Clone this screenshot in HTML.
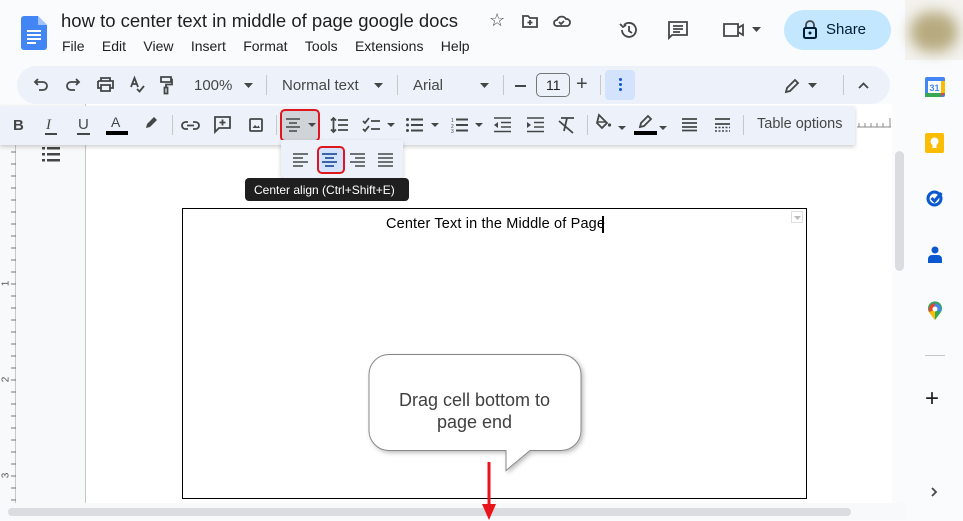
<!DOCTYPE html>
<html><head><style>
*{margin:0;padding:0;box-sizing:border-box}
body{width:963px;height:520px;overflow:hidden;background:#f9fbfd;font-family:"Liberation Sans",sans-serif;position:relative;color:#444746}
.a{position:absolute}
.t{position:absolute;white-space:nowrap}
svg{position:absolute;overflow:visible}
.ic{fill:none;stroke:#444746;stroke-width:1.8}
.sep{position:absolute;width:1px;background:#c7c7c7}
</style></head><body>
<!-- top header -->
<svg style="left:21px;top:16px" width="26" height="34" viewBox="0 0 26 34"><path d="M3 0h14l9 9v22a3 3 0 0 1-3 3H3a3 3 0 0 1-3-3V3a3 3 0 0 1 3-3z" fill="#4285f4"/><path d="M17 0v9h9z" fill="#a1c2fa"/><path d="M6 15h14M6 19h14M6 23h14M6 27h9" stroke="#fff" stroke-width="2"/></svg>
<div class="t" style="left:61px;top:10px;font-size:18.5px;color:#1f1f1f">how to center text in middle of page google docs</div>
<div class="t" style="left:62px;top:38px;font-size:14px;color:#1f1f1f;word-spacing:0.45px">File&nbsp;&nbsp;&nbsp;&nbsp;Edit&nbsp;&nbsp;&nbsp;&nbsp;View&nbsp;&nbsp;&nbsp;&nbsp;Insert&nbsp;&nbsp;&nbsp;&nbsp;Format&nbsp;&nbsp;&nbsp;&nbsp;Tools&nbsp;&nbsp;&nbsp;&nbsp;Extensions&nbsp;&nbsp;&nbsp;&nbsp;Help</div>
<div class="t" style="left:489px;top:10px;font-size:18px;color:#444746">☆</div>
<svg style="left:522px;top:15px" width="16" height="13"><path class="ic" d="M1 1h5l2 2h7v9H1z M8 5v5M5.5 7.5h5" stroke-width="1.5"/></svg>
<svg style="left:553px;top:15px" width="18" height="12"><path class="ic" d="M4 11a3 3 0 0 1 0-6 5 5 0 0 1 9-1 3.5 3.5 0 0 1 1 7z M6 7l2 2 3-3" stroke-width="1.5"/></svg>
<svg style="left:619px;top:20px" width="20" height="20"><path class="ic" d="M3 10a7 7 0 1 0 2-5M1 4l3 3 3-2M10 6v5l3 2" stroke-width="2"/></svg>
<svg style="left:668px;top:21px" width="20" height="20"><path class="ic" d="M1 1h18v13H4l-3 3z M5 5h10M5 8h10M5 11h7" stroke-width="1.8"/></svg>
<svg style="left:723px;top:22px" width="22" height="16"><path class="ic" d="M1 2h14v12H1z M15 6l5-3v10l-5-3" stroke-width="2"/></svg>
<svg style="left:752px;top:27px" width="10" height="5"><path d="M0 0h9l-4.5 5z" fill="#444746"/></svg>
<div class="a" style="left:784px;top:10px;width:107px;height:40px;border-radius:20px;background:#c2e7ff"></div>
<svg style="left:803px;top:20px" width="14" height="18"><path class="ic" d="M3 8V5a4 4 0 0 1 8 0v3" stroke-width="2"/><rect x="1" y="8" width="12" height="10" rx="1.5" fill="none" stroke="#001d35" stroke-width="2"/><circle cx="7" cy="13" r="1.5" fill="#001d35"/></svg>
<div class="t" style="left:826px;top:21px;font-size:15px;color:#001d35">Share</div>
<div class="a" style="left:905px;top:0;width:58px;height:60px;background:#f4f3ef"></div>
<div class="a" style="left:910px;top:12px;width:48px;height:40px;border-radius:20px;background:#b7aa7f;filter:blur(7px)"></div>

<!-- toolbar 1 -->
<div class="a" style="left:17px;top:66px;width:873px;height:38px;border-radius:19px;background:#edf2fa"></div>
<svg style="left:34px;top:78px" width="14" height="12"><path class="ic" d="M4 1L1 4l3 3M1 4h8a4 4 0 0 1 0 8H5" stroke-width="1.6"/></svg>
<svg style="left:66px;top:78px" width="14" height="12"><path class="ic" d="M10 1l3 3-3 3M13 4H5a4 4 0 0 0 0 8h4" stroke-width="1.6"/></svg>
<svg style="left:97px;top:77px" width="17" height="15"><path class="ic" d="M4 4V1h9v3M1 4h15v7h-3M4 11H1V4M4 8h9v6H4z" stroke-width="1.6"/></svg>
<svg style="left:130px;top:77px" width="15" height="15"><path class="ic" d="M1 10L4.5 1 8 10M2.5 7h4M7 12l2.5 2.5L14 9" stroke-width="1.5"/></svg>
<svg style="left:160px;top:76px" width="13" height="18"><path class="ic" d="M1 1h10v5H1zM11 3.5h1v5H6v3M4.5 11.5h3v6h-3z" stroke-width="1.5"/></svg>
<div class="t" style="left:194px;top:77px;font-size:15px;color:#444746">100%</div>
<svg style="left:244px;top:83px" width="9" height="5"><path d="M0 0h9l-4.5 5z" fill="#444746"/></svg>
<div class="sep" style="left:266px;top:75px;height:20px"></div>
<div class="t" style="left:282px;top:77px;font-size:15px;color:#444746">Normal text</div>
<svg style="left:374px;top:83px" width="9" height="5"><path d="M0 0h9l-4.5 5z" fill="#444746"/></svg>
<div class="sep" style="left:397px;top:75px;height:20px"></div>
<div class="t" style="left:413px;top:77px;font-size:15px;color:#444746">Arial</div>
<svg style="left:480px;top:83px" width="9" height="5"><path d="M0 0h9l-4.5 5z" fill="#444746"/></svg>
<div class="sep" style="left:503px;top:75px;height:20px"></div>
<div class="a" style="left:515px;top:85px;width:11px;height:2px;background:#444746"></div>
<div class="a" style="left:536px;top:73px;width:34px;height:24px;border:1px solid #747775;border-radius:5px"></div>
<div class="t" style="left:546px;top:77px;font-size:14px;color:#1f1f1f">11</div>
<div class="t" style="left:576px;top:73px;font-size:20px;color:#444746">+</div>
<div class="sep" style="left:600px;top:75px;height:20px"></div>
<div class="a" style="left:605px;top:70px;width:30px;height:30px;border-radius:4px;background:#d3e3fd"></div>
<div class="a" style="left:619px;top:78px;width:3px;height:3px;border-radius:2px;background:#0b57d0;box-shadow:0 5px 0 #0b57d0,0 10px 0 #0b57d0"></div>
<svg style="left:784px;top:78px" width="16" height="16"><path class="ic" d="M2 14l1-4 8-8 3 3-8 8z" stroke-width="1.6"/></svg>
<svg style="left:808px;top:83px" width="9" height="5"><path d="M0 0h9l-4.5 5z" fill="#444746"/></svg>
<div class="sep" style="left:843px;top:75px;height:20px"></div>
<svg style="left:858px;top:82px" width="11" height="7"><path class="ic" d="M1 6l4.5-4.5L10 6" stroke-width="1.8"/></svg>

<!-- page area -->
<div class="a" style="left:0;top:104px;width:86px;height:416px;background:#f8f9fa;border-right:1px solid #c7c7c7"></div>
<div class="a" style="left:86px;top:104px;width:806px;height:404px;background:#fff"></div>
<div class="a" style="left:15px;top:140px;width:1px;height:370px;background:#c7c7c7"></div>
<svg style="left:0;top:140px" width="20" height="370"><g stroke="#777" stroke-width="1">
<path d="M11 12h5M11 24h5M11 36h5M11 48h5M11 60h5M11 72h5M11 84h5M11 96h5M11 108h5M11 120h5M11 132h5M11 144h5M11 156h5M11 168h5M11 180h5M11 192h5M11 204h5M11 216h5M11 228h5M11 240h5M11 252h5M11 264h5M11 276h5M11 288h5M11 300h5M11 312h5M11 324h5M11 336h5M11 348h5M11 360h5"/></g></svg>
<div class="t" style="left:3px;top:278px;font-size:10px;color:#555;transform:rotate(-90deg)">1</div>
<div class="t" style="left:3px;top:374px;font-size:10px;color:#555;transform:rotate(-90deg)">2</div>
<div class="t" style="left:3px;top:470px;font-size:10px;color:#555;transform:rotate(-90deg)">3</div>
<svg style="left:42px;top:147px" width="20" height="16"><g fill="#444746"><rect x="0" y="0" width="3" height="2.5"/><rect x="0" y="6" width="3" height="2.5"/><rect x="0" y="12" width="3" height="2.5"/><rect x="5" y="0" width="13" height="2.5"/><rect x="5" y="6" width="13" height="2.5"/><rect x="5" y="12" width="13" height="2.5"/></g></svg>
<svg style="left:855px;top:114px" width="38" height="14"><path d="M2 13h34M4 9v4M10 9v4M16 9v4M22 9v4M28 9v4M35 4v9" stroke="#888" stroke-width="1"/></svg>
<!-- scrollbars -->
<div class="a" style="left:895px;top:151px;width:9px;height:120px;border-radius:5px;background:#dadce0"></div>
<div class="a" style="left:0;top:503px;width:905px;height:17px;background:#f8f9fa"></div>
<div class="a" style="left:8px;top:508px;width:843px;height:8px;border-radius:4px;background:#dadce0"></div>

<!-- table -->
<div class="a" style="left:182px;top:208px;width:625px;height:291px;border:1px solid #000;background:#fff"></div>
<div class="a" style="left:791px;top:211px;width:12px;height:12px;border:1px solid #ddd"></div>
<svg style="left:794px;top:216px" width="7" height="4"><path d="M0 0h7l-3.5 4z" fill="#bbb"/></svg>
<div class="t" style="left:386px;top:216px;font-size:14.5px;letter-spacing:0.15px;color:#000">Center Text in the Middle of Page</div>
<div class="a" style="left:602px;top:216px;width:2px;height:17px;background:#000"></div>

<!-- callout -->
<svg style="left:360px;top:348px" width="240" height="130"><defs><filter id="sh" x="-10%" y="-10%" width="130%" height="130%"><feDropShadow dx="2" dy="2" stdDeviation="2" flood-color="#000" flood-opacity=".25"/></filter></defs>
<path d="M29 6.5h172a20 20 0 0 1 20 20v56a20 20 0 0 1-20 20H170l-24 20v-20H29a20 20 0 0 1-20-20v-56a20 20 0 0 1 20-20z" fill="#fff" stroke="#888" stroke-width="1" filter="url(#sh)"/></svg>
<div class="t" style="left:368px;top:389px;width:213px;text-align:center;font-size:18px;line-height:22px;color:#404040">Drag cell bottom to<br>page end</div>
<svg style="left:481px;top:461px" width="16" height="60"><path d="M8 1v44" stroke="#e8141a" stroke-width="3"/><path d="M1 43h14l-7 16z" fill="#e8141a"/></svg>

<!-- toolbar 2 -->
<div class="a" style="left:0;top:106px;width:855px;height:39px;background:#edf2fa;box-shadow:0 2px 4px rgba(0,0,0,.18)"></div>
<div class="t" style="left:13px;top:117px;font-size:15px;font-weight:bold;color:#444746">B</div>
<div class="t" style="left:46px;top:117px;font-size:15px;font-style:italic;font-family:'Liberation Serif',serif;color:#444746">I</div>
<div class="a" style="left:45px;top:133px;width:12px;height:1.6px;background:#444746"></div>
<div class="t" style="left:78px;top:116px;font-size:15px;color:#444746">U</div>
<div class="a" style="left:77px;top:133px;width:13px;height:1.6px;background:#444746"></div>
<div class="t" style="left:111px;top:114px;font-size:14px;color:#444746">A</div>
<div class="a" style="left:106px;top:131px;width:22px;height:4px;background:#000"></div>
<svg style="left:144px;top:116px" width="15" height="14"><path d="M2 12l1-4 7-7 3 3-7 7z" fill="#444746"/></svg>
<div class="sep" style="left:172px;top:115px;height:20px"></div>
<svg style="left:181px;top:121px" width="19" height="9"><path class="ic" d="M7 1H4.5a3.5 3.5 0 0 0 0 7H7M12 1h2.5a3.5 3.5 0 0 1 0 7H12M6 4.5h7" stroke-width="1.6"/></svg>
<svg style="left:214px;top:116px" width="17" height="18"><path class="ic" d="M1 1h15v11H5l-4 4z M8.5 3.5v6M5.5 6.5h6" stroke-width="1.5"/></svg>
<svg style="left:249px;top:118px" width="14" height="14"><rect x="1" y="1" width="12" height="12" rx="1" class="ic" stroke-width="1.5"/><path d="M3.5 10l2.5-3 2 2 1.5-1.5 1.5 2.5z" fill="#444746"/></svg>
<div class="sep" style="left:276px;top:115px;height:20px"></div>
<div class="a" style="left:280px;top:109px;width:40px;height:33px;border:2px solid #e0161e;border-radius:5px;background:#d0d3d8"></div>
<svg style="left:286px;top:118px" width="14" height="14"><path d="M0 1h14M3 5h8M0 9h14M3 13h8" stroke="#444746" stroke-width="1.6"/></svg>
<svg style="left:308px;top:123px" width="8" height="4"><path d="M0 0h8l-4 4z" fill="#444746"/></svg>
<svg style="left:330px;top:117px" width="18" height="16"><path d="M3.5 1v14M1 3.5l2.5-2.5 2.5 2.5M1 12.5l2.5 2.5 2.5-2.5M8 3h10M8 8h10M8 13h10" class="ic" stroke-width="1.5"/></svg>
<svg style="left:362px;top:117px" width="20" height="16"><path d="M1 4l2 2 4-5M9 4h9M1 12l2 2 4-5M9 12h9" class="ic" stroke-width="1.5"/></svg>
<svg style="left:387px;top:123px" width="8" height="4"><path d="M0 0h8l-4 4z" fill="#444746"/></svg>
<svg style="left:406px;top:118px" width="17" height="14"><g fill="#444746"><circle cx="1.5" cy="1.5" r="1.5"/><circle cx="1.5" cy="7" r="1.5"/><circle cx="1.5" cy="12.5" r="1.5"/><rect x="5" y="0.5" width="12" height="2"/><rect x="5" y="6" width="12" height="2"/><rect x="5" y="11.5" width="12" height="2"/></g></svg>
<svg style="left:431px;top:123px" width="8" height="4"><path d="M0 0h8l-4 4z" fill="#444746"/></svg>
<svg style="left:451px;top:117px" width="17" height="16"><g fill="#444746"><rect x="5" y="1.5" width="12" height="2"/><rect x="5" y="7" width="12" height="2"/><rect x="5" y="12.5" width="12" height="2"/></g><text x="0" y="5" font-size="5" fill="#444746">1</text><text x="0" y="11" font-size="5" fill="#444746">2</text><text x="0" y="16" font-size="5" fill="#444746">3</text></svg>
<svg style="left:475px;top:123px" width="8" height="4"><path d="M0 0h8l-4 4z" fill="#444746"/></svg>
<svg style="left:494px;top:117px" width="17" height="16"><path d="M0 1h17M7 5.5h10M7 10h10M0 14.5h17" stroke="#444746" stroke-width="1.6"/><path d="M4 5l-4 3 4 3z" fill="#444746"/></svg>
<svg style="left:527px;top:117px" width="17" height="16"><path d="M0 1h17M7 5.5h10M7 10h10M0 14.5h17" stroke="#444746" stroke-width="1.6"/><path d="M0 5l4 3-4 3z" fill="#444746"/></svg>
<svg style="left:558px;top:117px" width="17" height="17"><path d="M3 1h13M9 1L6 14M1 4l14 12" class="ic" stroke-width="1.8"/></svg>
<div class="sep" style="left:587px;top:115px;height:20px"></div>
<svg style="left:596px;top:114px" width="16" height="16"><path d="M3 1l8 8-5 5-5-5z" fill="none" stroke="#444746" stroke-width="1.8"/><path d="M1 8h9" stroke="#444746" stroke-width="1.5"/><circle cx="13.5" cy="11" r="1.6" fill="#444746"/></svg>
<svg style="left:618px;top:126px" width="8" height="4"><path d="M0 0h8l-4 4z" fill="#444746"/></svg>
<svg style="left:639px;top:115px" width="14" height="13"><path d="M1 12l1-4 7-7 3 3-7 7z" fill="none" stroke="#444746" stroke-width="1.8"/></svg>
<div class="a" style="left:634px;top:131px;width:23px;height:4px;background:#000"></div>
<svg style="left:659px;top:126px" width="8" height="4"><path d="M0 0h8l-4 4z" fill="#444746"/></svg>
<svg style="left:682px;top:118px" width="15" height="13"><path d="M0 1h15M0 5h15M0 9h15M0 12.5h15" stroke="#444746" stroke-width="1.8"/></svg>
<svg style="left:715px;top:118px" width="15" height="14"><path d="M0 1h15M0 6h15" stroke="#444746" stroke-width="1.8"/><path d="M0 9.5h15M0 13h15" stroke="#444746" stroke-width="1.5" stroke-dasharray="2 1.5"/></svg>
<div class="sep" style="left:743px;top:115px;height:20px"></div>
<div class="t" style="left:757px;top:116px;font-size:14.5px;color:#444746">Table options</div>

<!-- alignment dropdown -->
<div class="a" style="left:281px;top:140px;width:122px;height:38px;background:#edf2fa;box-shadow:0 2px 5px rgba(0,0,0,.2);border-radius:0 0 4px 4px"></div>
<svg style="left:293px;top:153px" width="16" height="14"><path d="M0 1h15M0 5h10M0 9h15M0 13h10" stroke="#444746" stroke-width="1.6"/></svg>
<div class="a" style="left:317px;top:146px;width:28px;height:28px;border:2px solid #e0161e;border-radius:5px;background:#d3e3fd"></div>
<svg style="left:322px;top:153px" width="16" height="14"><path d="M0 1h15M3 5h9M0 9h15M3 13h9" stroke="#0b3a8a" stroke-width="1.6"/></svg>
<svg style="left:350px;top:153px" width="16" height="14"><path d="M0 1h15M5 5h10M0 9h15M5 13h10" stroke="#444746" stroke-width="1.6"/></svg>
<svg style="left:378px;top:153px" width="16" height="14"><path d="M0 1h15M0 5h15M0 9h15M0 13h15" stroke="#444746" stroke-width="1.6"/></svg>
<div class="a" style="left:245px;top:178px;width:164px;height:23px;background:#1f1f1f;border-radius:4px"></div>
<div class="t" style="left:254px;top:183px;font-size:12px;color:#fff">Center align (Ctrl+Shift+E)</div>

<!-- right sidebar -->
<svg style="left:925px;top:77px" width="20" height="20"><rect x="0" y="0" width="20" height="20" rx="2" fill="#4285f4"/><rect x="0" y="16" width="16" height="4" fill="#34a853"/><rect x="16" y="4" width="4" height="12" fill="#fbbc04"/><path d="M16 16h4l-4 4z" fill="#ea4335"/><rect x="3" y="4" width="13" height="12" fill="#fff"/><text x="9.5" y="14" font-size="9" font-weight="bold" text-anchor="middle" fill="#4285f4" font-family="Liberation Sans">31</text></svg>
<svg style="left:925px;top:133px" width="19" height="20"><rect x="0" y="0" width="19" height="20" rx="2" fill="#fbbc04"/><circle cx="9.5" cy="8.5" r="4" fill="#fff"/><rect x="7.5" y="12" width="4" height="3" fill="#fff"/></svg>
<svg style="left:926px;top:189px" width="18" height="18"><circle cx="8.5" cy="9.5" r="6.5" fill="none" stroke="#0b57d0" stroke-width="3"/><path d="M5.5 9l3 3 7-8" fill="none" stroke="#0b57d0" stroke-width="3"/></svg>
<svg style="left:927px;top:246px" width="16" height="18"><circle cx="8" cy="4" r="3.5" fill="#0b57d0"/><path d="M1 17v-4a4 4 0 0 1 4-4h6a4 4 0 0 1 4 4v4z" fill="#0b57d0"/></svg>
<svg style="left:927px;top:302px" width="16" height="18"><path d="M8 18L2 10a7 7 0 1 1 12 0z" fill="#34a853"/><path d="M2 10a7 7 0 0 1 6-9l-1 7z" fill="#ea4335"/><path d="M8 1a7 7 0 0 1 6 9L8 8z" fill="#4285f4"/><path d="M2 10l6-2 0 10z" fill="#fbbc04"/><circle cx="8" cy="7" r="2.5" fill="#fff"/></svg>
<div class="a" style="left:925px;top:355px;width:20px;height:1px;background:#c7c7c7"></div>
<div class="t" style="left:925px;top:386px;font-size:24px;color:#1f1f1f;line-height:26px">+</div>
<svg style="left:931px;top:487px" width="7" height="10"><path d="M1 1l4 4-4 4" fill="none" stroke="#444746" stroke-width="1.8"/></svg>
</body></html>
